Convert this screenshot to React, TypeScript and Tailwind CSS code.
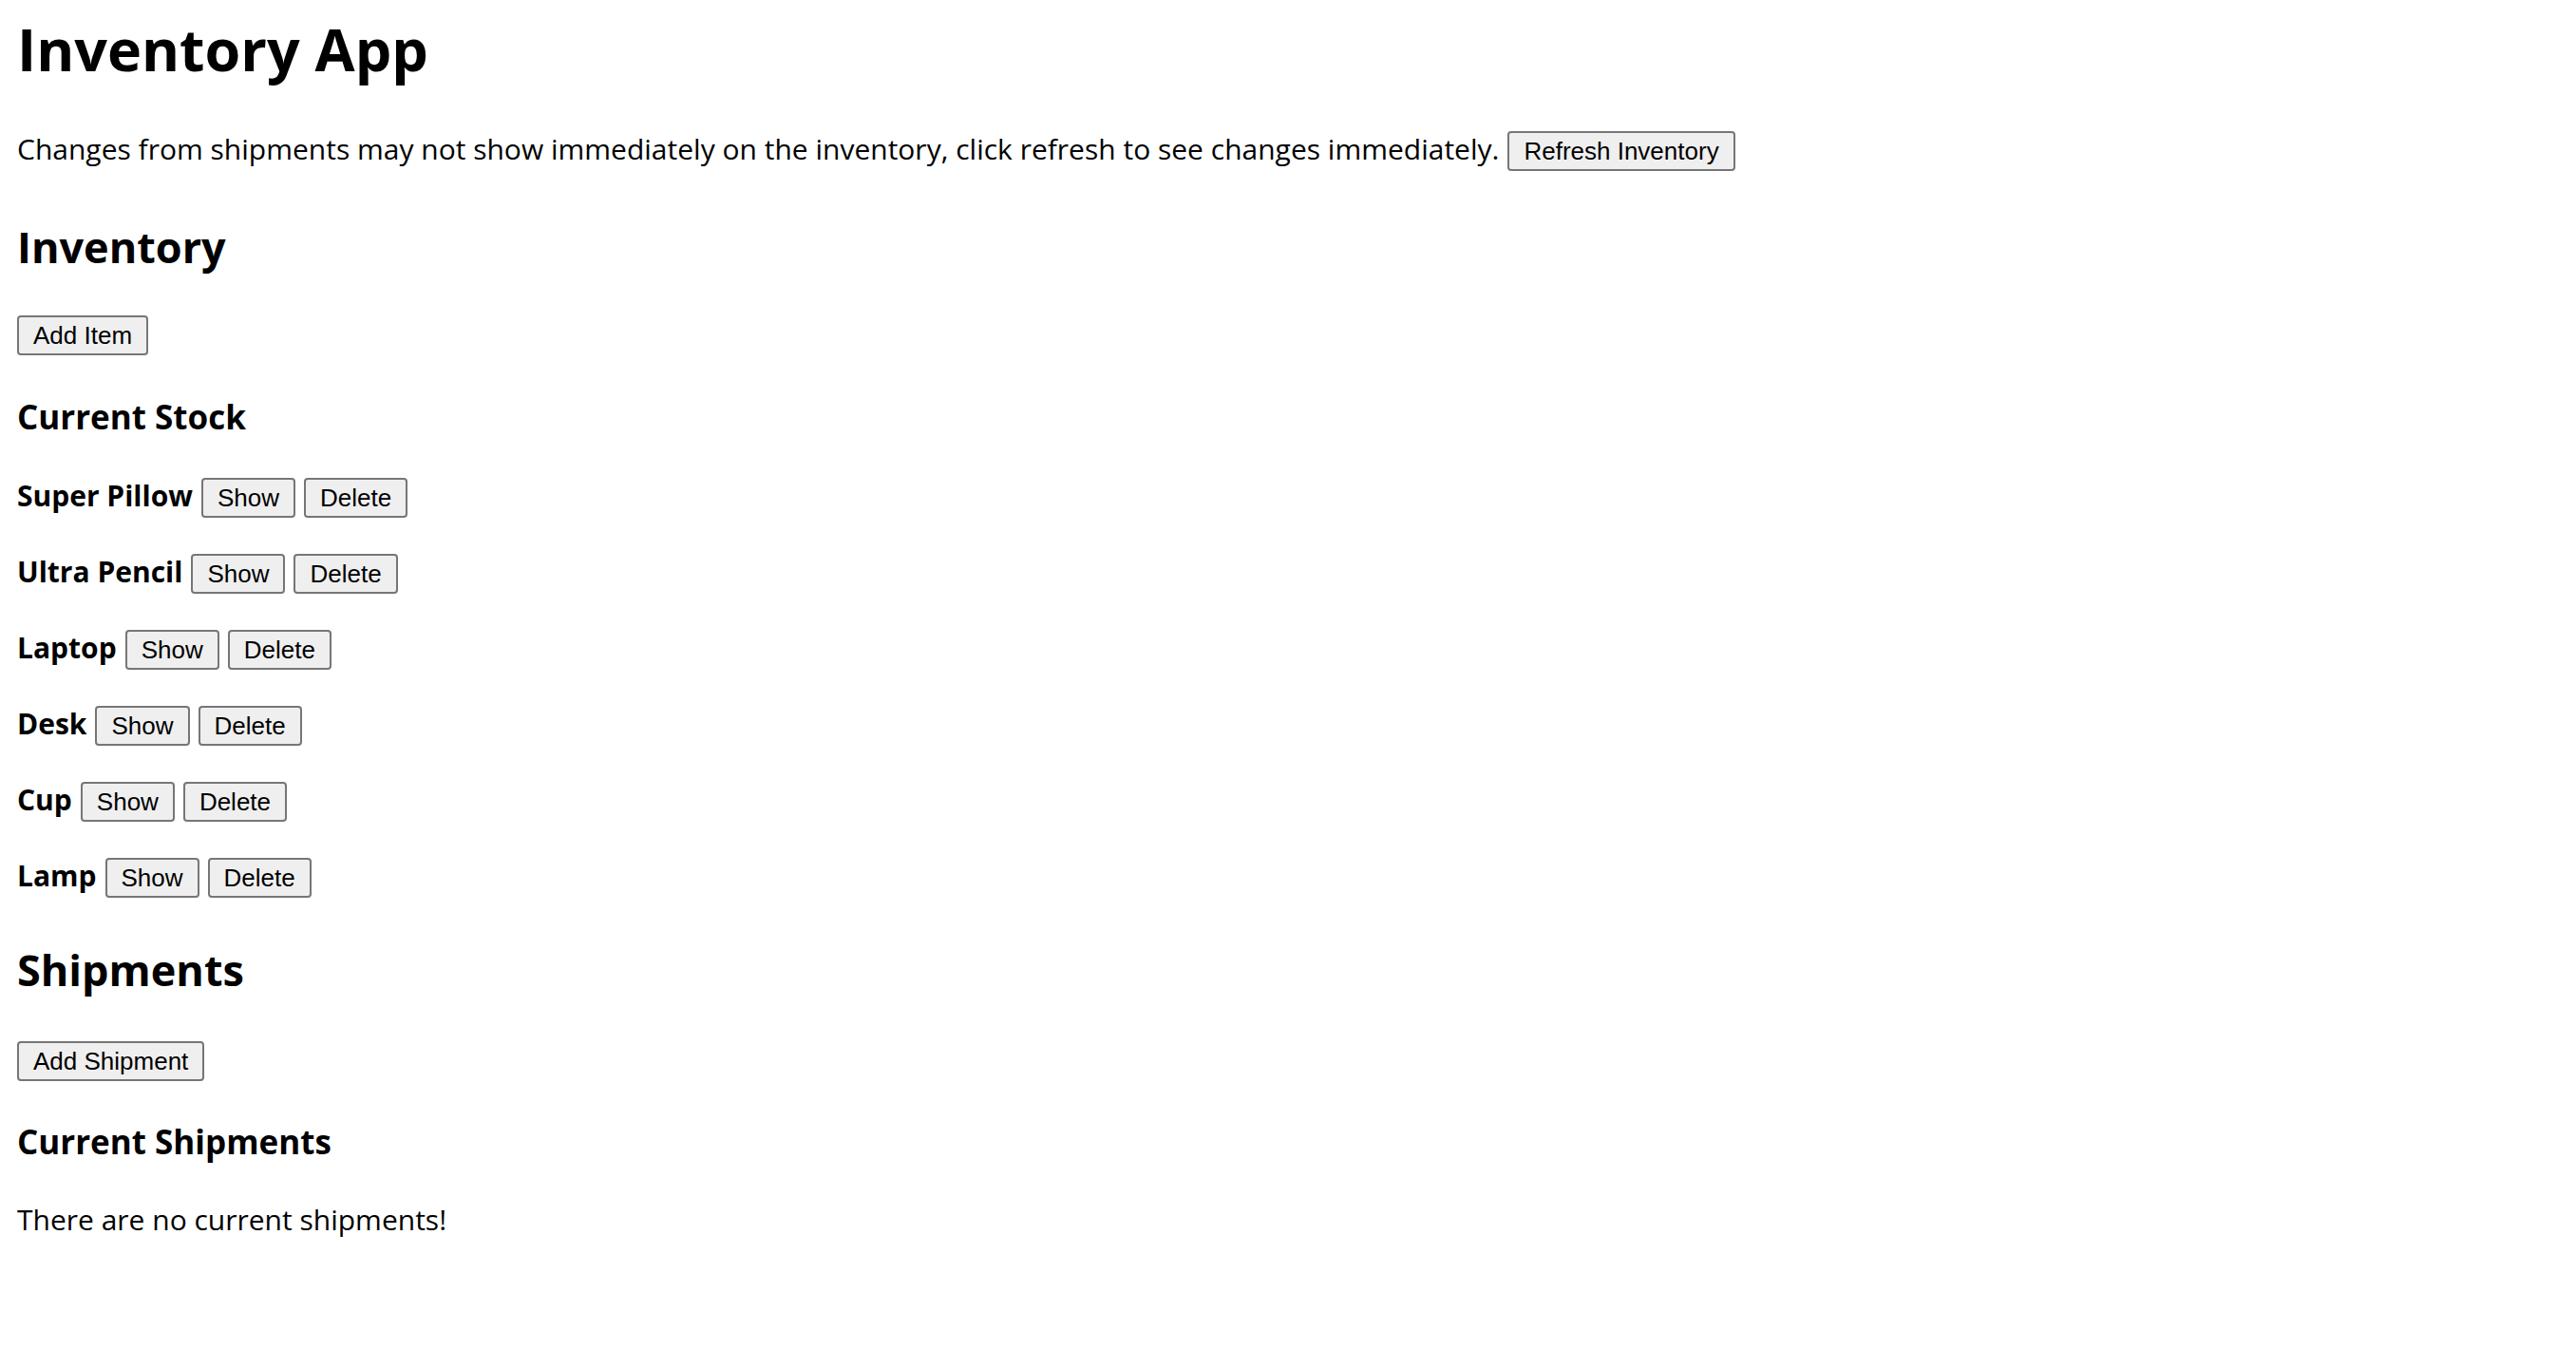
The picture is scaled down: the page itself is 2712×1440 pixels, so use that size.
import { useState } from "react";

const initialStock = ["Super Pillow", "Ultra Pencil", "Laptop", "Desk", "Cup", "Lamp"];

function Btn({ children, onClick }: { children: React.ReactNode; onClick?: () => void }) {
  return (
    <button
      onClick={onClick}
      className="h-[42px] px-[15px] bg-[#efefef] border-2 border-[#767676] rounded-[4px] text-[26px] text-black font-['Liberation_Sans',Arial,sans-serif] hover:bg-[#e5e5e5]"
    >
      {children}
    </button>
  );
}

export default function App() {
  const [stock, setStock] = useState(initialStock);
  const [shipments] = useState<string[]>([]);

  return (
    <main className="min-h-screen bg-white text-black px-[18px] pb-10 font-['Open_Sans','Noto_Sans',sans-serif]">
      <h1 className="pt-[21px] text-[61px] leading-none font-bold">Inventory App</h1>

      <div className="mt-[56px] flex items-baseline gap-[9px]">
        <p className="text-[30px] leading-none">
          Changes from shipments may not show immediately on the inventory, click refresh to see changes immediately.
        </p>
        <Btn onClick={() => setStock(initialStock)}>Refresh Inventory</Btn>
      </div>

      {/* inventory */}
      <h2 className="mt-[57px] text-[45px] leading-none font-bold">Inventory</h2>
      <div className="mt-[50px]">
        <Btn>Add Item</Btn>
      </div>

      <h3 className="mt-[47px] text-[35px] leading-none font-bold">Current Stock</h3>
      <div className="mt-[47px] flex flex-col gap-[38px]">
        {stock.map((item) => (
          <div key={item} className="flex items-baseline gap-[9px]">
            <span className="text-[30px] leading-none font-bold">{item}</span>
            <Btn>Show</Btn>
            <Btn onClick={() => setStock(stock.filter((s) => s !== item))}>Delete</Btn>
          </div>
        ))}
      </div>

      {/* shipments */}
      <h2 className="mt-[53px] text-[45px] leading-none font-bold">Shipments</h2>
      <div className="mt-[53px]">
        <Btn>Add Shipment</Btn>
      </div>

      <h3 className="mt-[46px] text-[35px] leading-none font-bold">Current Shipments</h3>
      {shipments.length === 0 && (
        <p className="mt-[50px] text-[30px] leading-none">There are no current shipments!</p>
      )}
    </main>
  );
}
